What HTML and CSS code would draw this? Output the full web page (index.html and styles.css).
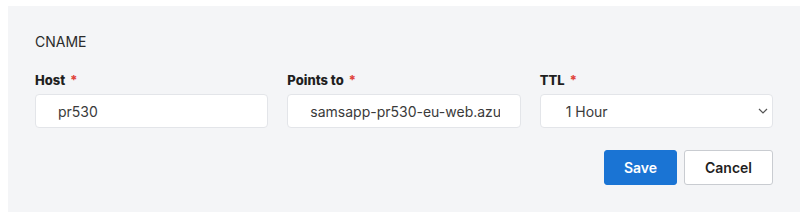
FILE: index.html
```html
<!DOCTYPE html>
<html lang="en">
<head>
  <meta charset="UTF-8">
  <meta name="viewport" content="width=device-width, initial-scale=1.0">
  <title>Edit record</title>
  <link rel="stylesheet" href="styles.css">
</head>
<body>
  <form class="record-form">
    <div class="record-type">CNAME</div>
    <div class="fields">
      <div class="field">
        <label class="field-label" for="host">Host <span class="req">*</span></label>
        <input class="field-input" id="host" type="text" value="pr530">
      </div>
      <div class="field">
        <label class="field-label" for="points">Points to <span class="req">*</span></label>
        <input class="field-input" id="points" type="text" value="samsapp-pr530-eu-web.azurewebsites.net">
      </div>
      <div class="field">
        <label class="field-label" for="ttl">TTL <span class="req">*</span></label>
        <div class="select-wrap">
          <select class="field-input field-select" id="ttl">
            <option>1 Hour</option>
            <option>1/2 Hour</option>
            <option>Custom</option>
          </select>
          <svg class="chevron" width="10" height="6" viewBox="0 0 10 6">
            <path d="M1 1l4 4 4-4" fill="none" stroke="#555" stroke-width="1.2"/>
          </svg>
        </div>
      </div>
    </div>
    <div class="actions">
      <button type="button" class="btn btn-primary">Save</button>
      <button type="button" class="btn btn-secondary">Cancel</button>
    </div>
  </form>
</body>
</html>
```

FILE: styles.css
```css
body {
  margin: 6px 10px 10px 8px;
  font-family: Inter, "Noto Sans", sans-serif;
  background: #fff;
  color: #222;
}
.record-form {
  background: #f4f5f7;
  padding: 26px 27px 27px 27px;
  height: 206px;
  box-sizing: border-box;
}
.record-type {
  font-size: 14px;
  line-height: 20px;
  color: #2b2b2b;
}
.fields {
  display: flex;
  gap: 19px;
  margin-top: 18px;
}
.field {
  flex: 1;
  display: flex;
  flex-direction: column;
}
.field-label {
  font-size: 13px;
  font-weight: 800;
  line-height: 20px;
  color: #1f1f1f;
  margin-bottom: 4px;
}
.req {
  color: #e0433b;
  margin-left: 2px;
}
.field-input {
  height: 34px;
  box-sizing: border-box;
  border: 1px solid #e3e5e9;
  border-radius: 4px;
  background: #fff;
  padding: 0 20px 0 22px;
  font-family: inherit;
  font-size: 14px;
  color: #3a3a3a;
  width: 100%;
  outline: none;
}
.select-wrap {
  position: relative;
}
.field-select {
  appearance: none;
  -webkit-appearance: none;
  padding-left: 25px;
}
.chevron {
  position: absolute;
  right: 5px;
  top: 14px;
  pointer-events: none;
}
.actions {
  display: flex;
  justify-content: flex-end;
  gap: 7px;
  margin-top: 22px;
}
.btn {
  height: 35px;
  border-radius: 3px;
  font-family: inherit;
  font-size: 14px;
  font-weight: 600;
  cursor: pointer;
}
.btn-primary {
  width: 73px;
  background: #1a74d4;
  border: 1px solid #1a74d4;
  color: #fff;
}
.btn-secondary {
  width: 89px;
  background: #fff;
  border: 1px solid #c9ccd1;
  color: #1f1f1f;
}
```
